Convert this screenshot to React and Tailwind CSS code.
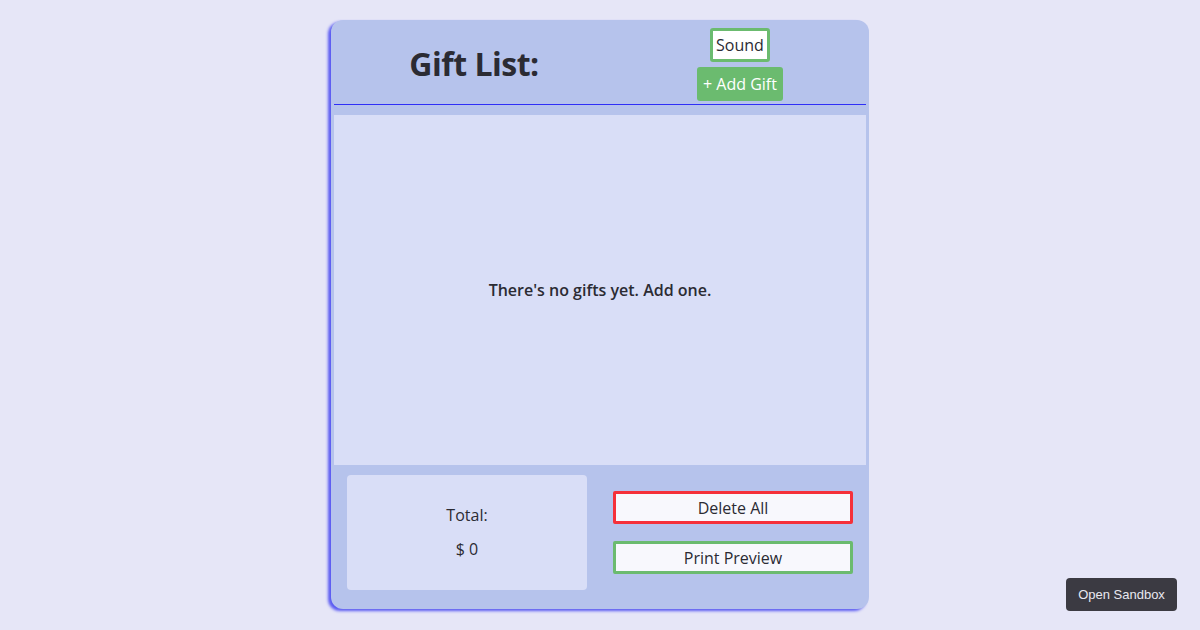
export default function App() {
  return (
    <div className="w-[1200px] h-[630px] bg-[#e6e6f7] relative overflow-hidden" style={{ fontFamily: '"Open Sans", "Noto Sans", sans-serif' }}>
      <div className="absolute left-[331px] top-[20px] w-[538px] h-[589px] bg-[#b6c3ec] rounded-[12px] shadow-[-3px_2px_3px_#5a5af2] px-[3px] flex flex-col">
        <div className="h-[84px] flex">
          <div className="w-[280px] flex items-center justify-center pt-[3px]">
            <h1 className="text-[32px] font-bold text-[#2b2b33] tracking-[-0.5px]">Gift List:</h1>
          </div>
          <div className="flex-1 flex flex-col items-center pt-[8px]">
            <button className="h-[34px] px-[3px] bg-white border-[3px] border-[#6bbb6f] rounded-[3px] text-[16px] text-[#2b2b33] leading-none">Sound</button>
            <button className="mt-[5px] h-[34px] px-[6px] bg-[#6bbb6f] rounded-[3px] text-[16px] text-white leading-none">+ Add Gift</button>
          </div>
        </div>
        <div className="h-[1px] bg-[#2f2ff7]"></div>
        <div className="mt-[10px] h-[350px] bg-[#d9def7] flex items-center justify-center">
          <p className="text-[16px] font-semibold text-[#2b2b33]">There's no gifts yet. Add one.</p>
        </div>
        <div className="flex px-[13px] pt-[10px]">
          <div className="w-[240px] h-[115px] bg-[#d9def7] rounded-[4px] flex flex-col items-center justify-center pb-[2px] text-[16px] text-[#2b2b33]">
            <span>Total:</span>
            <span className="mt-[10px]">$ 0</span>
          </div>
          <div className="ml-[26px] flex flex-col pt-[16px] gap-[17px]">
            <button className="w-[240px] h-[33px] bg-[#f8f8fd] border-[3px] border-[#f5303a] rounded-[2px] text-[16px] text-[#2b2b33]">Delete All</button>
            <button className="w-[240px] h-[33px] bg-[#f8f8fd] border-[3px] border-[#6bbb6f] rounded-[2px] text-[16px] text-[#2b2b33]">Print Preview</button>
          </div>
        </div>
      </div>
      <button className="absolute left-[1066px] top-[578px] w-[111px] h-[33px] bg-[#3b3a42] rounded-[4px] text-[13px] text-[#e8e8f0]" style={{ fontFamily: '"Liberation Sans", Arial, sans-serif' }}>Open Sandbox</button>
    </div>
  );
}
